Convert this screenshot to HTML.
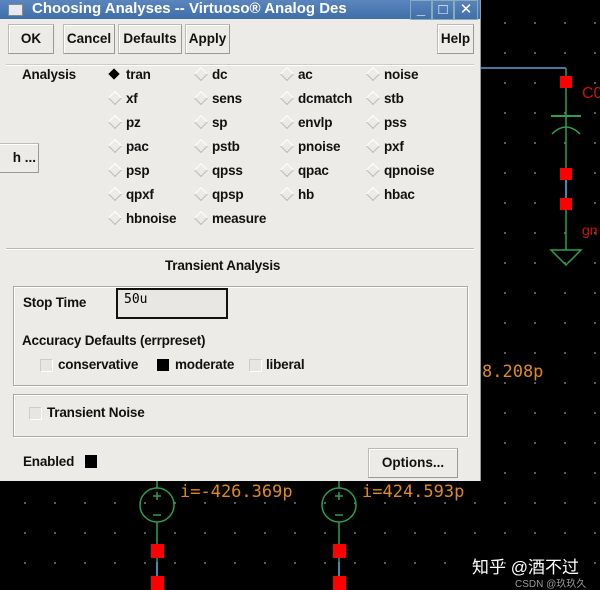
<!DOCTYPE html>
<html><head><meta charset="utf-8"><style>
body{margin:0;width:600px;height:590px;overflow:hidden;background:#000;position:relative;font-family:"Liberation Sans","DejaVu Sans",sans-serif;}
.bg{position:absolute;left:0;top:0;width:600px;height:590px;background-image:radial-gradient(circle,#667 0.9px,transparent 1.2px);background-size:30px 30px;background-position:10px 8px;}
.dlg{position:absolute;left:0;top:0;width:480px;height:481px;background:#edebe7;border-right:1px solid #999;}
.title{position:absolute;left:0;top:0;width:480px;height:19px;background:linear-gradient(#5a86bd,#3f6ea8);color:#fff;font-weight:bold;font-size:15px;line-height:18px;}
.t{position:absolute;font-size:13.5px;font-weight:bold;color:#111;white-space:nowrap;letter-spacing:-0.2px}
.btn{position:absolute;background:#edebe7;border:1px solid #bbb;border-right-color:#999;border-bottom-color:#999;box-shadow:inset 1px 1px #fff;font-size:13.5px;font-weight:bold;color:#111;text-align:center;}
.dia{position:absolute;width:8px;height:8px;border-left:1px solid #bbb;border-bottom:1px solid #bbb;border-top:1px solid #fff;border-right:1px solid #fff;transform:rotate(-45deg);}
.box{position:absolute;border:1px solid #aaa;box-shadow:inset 1px 1px #fff,1px 1px #fff;}
.cb{position:absolute;width:11px;height:11px;background:#e8e6e2;border:1px solid #ccc;border-right-color:#fff;border-bottom-color:#fff;}
.o{position:absolute;color:#e08a1e;font-family:"DejaVu Sans Mono","Liberation Mono",monospace;font-size:17px;}
</style></head><body>
<div class="bg"></div>
<svg width="600" height="590" style="position:absolute;left:0;top:0">
<path d="M480 68H566" stroke="#5a9ad6" stroke-width="1.5" fill="none"/>
<path d="M566 68V250" stroke="#2aa050" stroke-width="1.5"/>
<path d="M566 175V205" stroke="#5a9ad6" stroke-width="1.5"/>
<path d="M551 116H581" stroke="#2aa050" stroke-width="2"/>
<path d="M552 134Q566 120 580 134" stroke="#2aa050" stroke-width="1.5" fill="none"/>
<path d="M551 250H581L566 265Z" stroke="#2aa050" stroke-width="1.5" fill="none"/>
<rect x="560" y="76" width="12" height="12" fill="#f00"/>
<rect x="560" y="168" width="12" height="12" fill="#f00"/>
<rect x="560" y="198" width="12" height="12" fill="#f00"/>
<text x="582" y="98" fill="#d01010" font-size="16" font-family="Liberation Sans">C0</text>
<text x="582" y="235" fill="#d01010" font-size="14" font-family="Liberation Sans">gn</text>
<g stroke="#2aa050" stroke-width="1.5" fill="none">
<path d="M157 481V488M157 522V590"/><circle cx="157" cy="505" r="17"/><path d="M153 496h8M157 492v8M153 515h8"/>
<path d="M339 481V488M339 522V590"/><circle cx="339" cy="505" r="17"/><path d="M335 496h8M339 492v8M335 515h8"/>
</g>
<path d="M157 562V576M339 562V576" stroke="#5a9ad6" stroke-width="1.5"/>
<rect x="151" y="544" width="13" height="14" fill="#f00"/><rect x="151" y="576" width="13" height="14" fill="#f00"/>
<rect x="333" y="544" width="13" height="14" fill="#f00"/><rect x="333" y="576" width="13" height="14" fill="#f00"/>
</svg>
<div class="o" style="left:482px;top:362px">8.208p</div>
<div class="o" style="left:180px;top:482px">i=-426.369p</div>
<div class="o" style="left:362px;top:482px">i=424.593p</div>
<div style="position:absolute;left:472px;top:553px;color:#fff;font-size:17px;font-family:'Liberation Sans','Noto Sans CJK SC',sans-serif">知乎 @酒不过</div>
<div style="position:absolute;left:515px;top:575px;color:#999;font-size:10px;font-family:'Liberation Sans','Noto Sans CJK SC',sans-serif">CSDN @玖玖久</div>

<div class="dlg">
<div class="title"><span style="position:absolute;left:8px;top:4px;width:13px;height:10px;background:#e8e8f0;border:1px solid #888"></span><span style="position:absolute;left:32px">Choosing Analyses -- Virtuoso® Analog Des</span>
<span style="position:absolute;left:410px;top:0;width:20px;height:18px;border:1px solid #8ab;text-align:center">_</span>
<span style="position:absolute;left:432px;top:0;width:20px;height:18px;border:1px solid #8ab;text-align:center">□</span>
<span style="position:absolute;left:454px;top:0;width:22px;height:18px;border:1px solid #8ab;text-align:center">✕</span></div>
<div class="btn" style="left:8px;top:24px;width:44px;height:28px;line-height:28px">OK</div>
<div class="btn" style="left:63px;top:24px;width:50px;height:28px;line-height:28px">Cancel</div>
<div class="btn" style="left:118px;top:24px;width:62px;height:28px;line-height:28px">Defaults</div>
<div class="btn" style="left:185px;top:24px;width:43px;height:28px;line-height:28px">Apply</div>
<div class="btn" style="left:437px;top:24px;width:35px;height:28px;line-height:28px">Help</div>
<div style="position:absolute;left:6px;top:64px;width:468px;height:1px;background:#ccc;border-bottom:1px solid #fff"></div>
<div class="t" style="left:22px;top:67px">Analysis</div>
<div style="position:absolute;left:110px;top:70px;width:8px;height:8px;background:#000;transform:rotate(45deg)"></div>
<div class="t" style="left:126px;top:67px">tran</div>
<div class="dia" style="left:196px;top:69px"></div><div class="t" style="left:212px;top:67px">dc</div>
<div class="dia" style="left:282px;top:69px"></div><div class="t" style="left:298px;top:67px">ac</div>
<div class="dia" style="left:368px;top:69px"></div><div class="t" style="left:384px;top:67px">noise</div>

<div class="dia" style="left:110px;top:93px"></div><div class="t" style="left:126px;top:91px">xf</div>
<div class="dia" style="left:196px;top:93px"></div><div class="t" style="left:212px;top:91px">sens</div>
<div class="dia" style="left:282px;top:93px"></div><div class="t" style="left:298px;top:91px">dcmatch</div>
<div class="dia" style="left:368px;top:93px"></div><div class="t" style="left:384px;top:91px">stb</div>

<div class="dia" style="left:110px;top:117px"></div><div class="t" style="left:126px;top:115px">pz</div>
<div class="dia" style="left:196px;top:117px"></div><div class="t" style="left:212px;top:115px">sp</div>
<div class="dia" style="left:282px;top:117px"></div><div class="t" style="left:298px;top:115px">envlp</div>
<div class="dia" style="left:368px;top:117px"></div><div class="t" style="left:384px;top:115px">pss</div>

<div class="dia" style="left:110px;top:141px"></div><div class="t" style="left:126px;top:139px">pac</div>
<div class="dia" style="left:196px;top:141px"></div><div class="t" style="left:212px;top:139px">pstb</div>
<div class="dia" style="left:282px;top:141px"></div><div class="t" style="left:298px;top:139px">pnoise</div>
<div class="dia" style="left:368px;top:141px"></div><div class="t" style="left:384px;top:139px">pxf</div>

<div class="dia" style="left:110px;top:165px"></div><div class="t" style="left:126px;top:163px">psp</div>
<div class="dia" style="left:196px;top:165px"></div><div class="t" style="left:212px;top:163px">qpss</div>
<div class="dia" style="left:282px;top:165px"></div><div class="t" style="left:298px;top:163px">qpac</div>
<div class="dia" style="left:368px;top:165px"></div><div class="t" style="left:384px;top:163px">qpnoise</div>

<div class="dia" style="left:110px;top:189px"></div><div class="t" style="left:126px;top:187px">qpxf</div>
<div class="dia" style="left:196px;top:189px"></div><div class="t" style="left:212px;top:187px">qpsp</div>
<div class="dia" style="left:282px;top:189px"></div><div class="t" style="left:298px;top:187px">hb</div>
<div class="dia" style="left:368px;top:189px"></div><div class="t" style="left:384px;top:187px">hbac</div>

<div class="dia" style="left:110px;top:213px"></div><div class="t" style="left:126px;top:211px">hbnoise</div>
<div class="dia" style="left:196px;top:213px"></div><div class="t" style="left:212px;top:211px">measure</div>

<div class="btn" style="left:-2px;top:143px;width:37px;height:28px;line-height:28px;text-align:right;padding-right:2px">h ...</div>

<div style="position:absolute;left:6px;top:248px;width:468px;height:1px;background:#bbb;border-bottom:1px solid #fff"></div>
<div class="t" style="left:165px;top:258px;font-size:13.5px">Transient Analysis</div>
<div class="box" style="left:13px;top:286px;width:453px;height:98px"></div>
<div class="t" style="left:23px;top:295px">Stop Time</div>
<div style="position:absolute;left:116px;top:288px;width:108px;height:27px;border:2px solid #111;background:#e9e7e3;font-family:'DejaVu Sans Mono',monospace;font-size:13px;line-height:20px;padding-left:6px;box-sizing:border-box;width:112px;height:31px">50u</div>
<div class="t" style="left:22px;top:333px">Accuracy Defaults (errpreset)</div>
<div class="cb" style="left:40px;top:359px"></div><div class="t" style="left:58px;top:357px">conservative</div>
<div style="position:absolute;left:157px;top:359px;width:12px;height:12px;background:#000"></div><div class="t" style="left:175px;top:357px">moderate</div>
<div class="cb" style="left:249px;top:359px"></div><div class="t" style="left:266px;top:357px">liberal</div>
<div class="box" style="left:13px;top:394px;width:453px;height:41px"></div>
<div class="cb" style="left:29px;top:407px"></div><div class="t" style="left:47px;top:405px">Transient Noise</div>
<div class="t" style="left:23px;top:454px">Enabled</div>
<div style="position:absolute;left:85px;top:455px;width:12px;height:13px;background:#000"></div>
<div class="btn" style="left:368px;top:448px;width:88px;height:28px;line-height:27px">Options...</div>
</div>
</body></html>
